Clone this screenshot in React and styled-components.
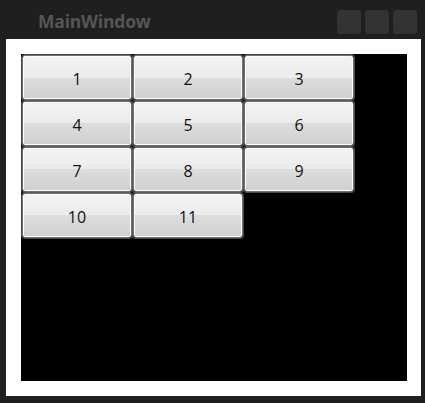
import React from "react";
import styled, { createGlobalStyle } from "styled-components";

const Global = createGlobalStyle`
  html, body { margin: 0; padding: 0; background: #1f1f1f; }
  body { width: 425px; height: 403px; overflow: hidden; }
`;

const Window = styled.div`
  width: 425px;
  height: 403px;
  background: #1f1f1f;
  display: flex;
  flex-direction: column;
  box-sizing: border-box;
`;

const TitleBar = styled.div`
  height: 39px;
  display: flex;
  align-items: center;
  padding: 0 8px 0 38px;
  box-sizing: border-box;
`;

const Title = styled.div`
  flex: 1;
  font-family: "Open Sans", "Noto Sans", sans-serif;
  font-weight: 700;
  font-size: 17.5px;
  color: #555555;
  letter-spacing: -0.2px;
  margin-top: 2px;
`;

const Caption = styled.div`
  display: flex;
  gap: 4px;
  margin-top: 5px;
`;

const CaptionButton = styled.div`
  width: 24px;
  height: 24px;
  border-radius: 3px;
  background: #333333;
`;

const Client = styled.div`
  margin: 0 4px 7px 6px;
  flex: 1;
  background: #ffffff;
  padding: 15px 14px 15px 15px;
  display: flex;
`;

const Panel = styled.div`
  flex: 1;
  background: #000000;
  display: flex;
  flex-wrap: wrap;
  align-content: flex-start;
`;

const Grid = styled.div`
  display: flex;
  flex-wrap: wrap;
  width: 333px;
  align-content: flex-start;
`;

const Button = styled.div`
  width: 110px;
  height: 45px;
  margin: 1px 0 0 1px;
  box-sizing: border-box;
  border: 1px solid #707070;
  border-radius: 3px;
  background: linear-gradient(
    to bottom,
    #f3f3f3 0%,
    #ebebeb 50%,
    #dddddd 50%,
    #cfcfcf 100%
  );
  box-shadow: inset 0 0 0 1px #fcfcfc, 0 0 0 1px rgba(96, 96, 96, 0.75);
  display: flex;
  align-items: center;
  justify-content: center;
  padding-top: 2px;
  font-family: "Open Sans", "Noto Sans", sans-serif;
  font-size: 16px;
  color: #111111;
`;

const items = ["1", "2", "3", "4", "5", "6", "7", "8", "9", "10", "11"];

export default function App() {
  return (
    <>
      <Global />
      <Window>
        <TitleBar>
          <Title>MainWindow</Title>
          <Caption>
            <CaptionButton />
            <CaptionButton />
            <CaptionButton />
          </Caption>
        </TitleBar>
        <Client>
          <Panel>
            <Grid>
              {items.map((n) => (
                <Button key={n}>{n}</Button>
              ))}
            </Grid>
          </Panel>
        </Client>
      </Window>
    </>
  );
}
